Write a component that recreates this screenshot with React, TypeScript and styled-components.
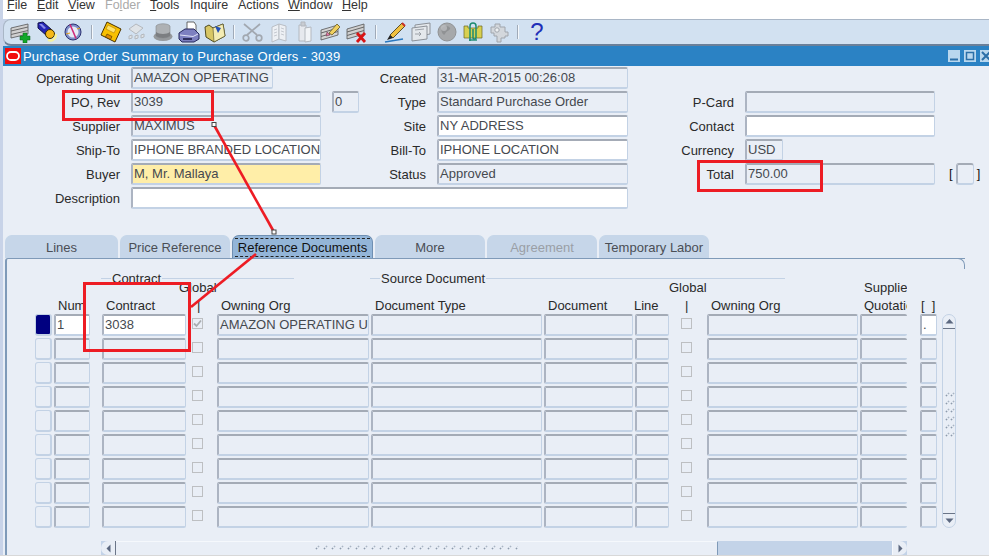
import React from 'react';
import styled, { createGlobalStyle } from 'styled-components';

const GlobalStyle = createGlobalStyle`
  html, body {
    margin: 0;
    padding: 0;
    background: #ffffff;
  }
  body {
    font-family: "Liberation Sans", Arial, sans-serif;
    font-size: 13px;
  }
`;

const Page = styled.div`
  position: relative;
  width: 989px;
  height: 558px;
  overflow: hidden;
  background: #ffffff;
`;

const Shell = styled.div`
  height: 555px;
  padding-left: 3px;
  box-sizing: border-box;
  background: #c8d3e8;
  display: flex;
  flex-direction: column;
`;

const BottomEdge = styled.div`
  height: 1px;
  background: #d8d8d8;
`;

const MenuBar = styled.div`
  height: 19px;
  flex: none;
  background: #ffffff;
  display: flex;
  padding-left: 4px;
  line-height: 10px;
  color: #333;
  font-size: 12.5px;
`;

const MenuItem = styled.span<{ $w: number; $off?: boolean }>`
  width: ${p => p.$w}px;
  color: ${p => (p.$off ? '#aaaaaa' : '#333333')};
  u { text-underline-offset: 1px; }
`;

const ToolBar = styled.div`
  height: 27px;
  flex: none;
  box-sizing: border-box;
  background: #d2e1f1;
  border-top: 1px solid #a9b6c6;
  border-left: 1px solid #a9b6c6;
  border-bottom: 2px solid #6b8099;
  border-top-left-radius: 8px;
  border-bottom-left-radius: 8px;
  display: flex;
  align-items: center;
  padding-left: 4px;
`;

const ToolSlot = styled.div`
  width: 26px;
  height: 22px;
  display: flex;
  align-items: center;
  justify-content: center;
`;

const ToolSep = styled.div`
  width: 12px;
  display: flex;
  justify-content: center;
  &::before {
    content: '';
    width: 1px;
    height: 14px;
    background: #a0aab8;
    border-right: 1px solid #f4f8fc;
  }
`;

const TitleBar = styled.div`
  height: 20px;
  flex: none;
  background: #2b82c4;
  color: #ffffff;
  display: flex;
  align-items: center;
  padding-left: 2px;
  gap: 2px;
  font-size: 13px;
  letter-spacing: 0.2px;
`;

const TitleText = styled.span`
  flex: 1;
`;

const WinButtons = styled.div`
  display: flex;
  gap: 4px;
  margin-right: -3px;
`;

const WinButton = styled.div`
  width: 12px;
  height: 12px;
  background: #b9d7ee;
  display: flex;
`;

const Body = styled.div`
  flex: 1;
  background: #e9eef6;
  display: flex;
  flex-direction: column;
  min-height: 0;
`;

const Form = styled.div`
  margin-top: 1px;
  display: grid;
  grid-template-columns: 128px 190px 38px 78px 191px 117px 190px 1fr;
  grid-auto-rows: 22px;
  row-gap: 2px;
`;

const Label = styled.div<{ $col: number; $row: number }>`
  grid-column: ${p => p.$col};
  grid-row: ${p => p.$row};
  text-align: right;
  padding-right: 11px;
  line-height: 24px;
  color: #2a2a2a;
  white-space: nowrap;
`;

const fieldColors = { ro: '#e9eef6', edit: '#ffffff', req: '#ffeea8' };

const Field = styled.div<{ $tone?: keyof typeof fieldColors; $open?: boolean }>`
  box-sizing: border-box;
  height: 22px;
  background: ${p => fieldColors[p.$tone || 'ro']};
  border-style: solid;
  border-width: 2px ${p => (p.$open ? 0 : 1)}px 2px 2px;
  border-color: #a4abb6 #c3d2e5 #c3d2e5 #acb4c2;
  border-radius: 2px;
  color: #45494f;
  line-height: 18px;
  padding-left: 1px;
  white-space: nowrap;
  overflow: hidden;
`;

const FormField = styled(Field)<{ $col: number; $row: number; $span?: number; $w?: number; $ml?: number }>`
  grid-column: ${p => p.$col} / span ${p => p.$span || 1};
  grid-row: ${p => p.$row};
  ${p => (p.$w ? `width: ${p.$w}px;` : '')}
  ${p => (p.$ml ? `margin-left: ${p.$ml}px;` : '')}
`;

const Extra = styled.div`
  grid-column: 8;
  grid-row: 5;
  display: flex;
  align-items: center;
  gap: 3px;
  margin-left: 14px;
  color: #111;
  line-height: 22px;
`;

const ExtraBox = styled(Field)`
  width: 18px;
  border-radius: 3px;
`;

const Tabs = styled.div`
  display: flex;
  gap: 2px;
  height: 23px;
  margin: 26px 0 0 2px;
  flex: none;
`;

const Tab = styled.div<{ $w: number; $active?: boolean; $off?: boolean }>`
  position: relative;
  width: ${p => p.$w}px;
  box-sizing: border-box;
  background: ${p => (p.$active ? '#93b5d8' : '#c6d6e9')};
  border: 1px solid ${p => (p.$active ? '#6f8fb2' : '#c6d6e9')};
  border-bottom: 0;
  border-radius: 7px 7px 0 0;
  text-align: center;
  line-height: 24px;
  color: ${p => (p.$off ? '#9a9fa6' : p.$active ? '#111111' : '#4a4e55')};
`;

const FocusRing = styled.span`
  position: absolute;
  inset: 2px 2px 1px 2px;
  border: 1px dashed #222;
  border-width: 1px 0;
`;

const Panel = styled.div`
  position: relative;
  flex: 1;
  width: 960px;
  box-sizing: border-box;
  margin-left: 2px;
  border-top: 1px solid #7f9ab8;
  border-left: 2px solid #7f9ab8;
  border-top-left-radius: 3px;
  padding: 12px 0 0 28px;
  &::after {
    content: '';
    position: absolute;
    top: -1px;
    right: 0;
    width: 8px;
    height: 10px;
    border-top: 1px solid #7f9ab8;
    border-right: 1px solid #7f9ab8;
    border-top-right-radius: 7px;
  }
`;

const GroupRow = styled.div`
  display: flex;
  height: 12px;
  padding-left: 66px;
`;

const Group = styled.div<{ $w: number; $ml?: number; $lead: number }>`
  width: ${p => p.$w}px;
  height: 12px;
  padding-top: 2px;
  box-sizing: content-box;
  margin-left: ${p => p.$ml || 0}px;
  display: flex;
  align-items: center;
  gap: 1px;
  color: #2a2a2a;
  line-height: 12px;
  white-space: nowrap;
  &::before, &::after {
    content: '';
    height: 1px;
    margin-top: -2px;
    background: #c3d2e5;
  }
  &::before { width: ${p => p.$lead}px; flex: none; }
  &::after { flex: 1; }
`;

const HeadRow = styled.div<{ $h: number; $lh: number }>`
  display: flex;
  height: ${p => p.$h}px;
  line-height: ${p => p.$lh}px;
  color: #2a2a2a;
`;

const HeadCell = styled.div<{ $w: number; $ml?: number; $pad?: number; $clip?: boolean }>`
  flex: none;
  box-sizing: border-box;
  width: ${p => p.$w}px;
  margin-left: ${p => p.$ml || 0}px;
  padding-left: ${p => p.$pad || 0}px;
  white-space: nowrap;
  overflow: ${p => (p.$clip ? 'hidden' : 'visible')};
`;

const TableArea = styled.div`
  display: flex;
`;

const Rows = styled.div`
  display: flex;
  flex-direction: column;
  gap: 2px;
`;

const Row = styled.div`
  display: flex;
  height: 22px;
`;

const Sized = styled(Field)<{ $w: number; $ml?: number }>`
  flex: none;
  width: ${p => p.$w}px;
  margin-left: ${p => p.$ml || 0}px;
`;

const Selector = styled.div<{ $current?: boolean }>`
  flex: none;
  box-sizing: border-box;
  width: 17px;
  height: 22px;
  border: 1px solid #c3d2e5;
  border-right-width: 2px;
  border-bottom-width: 2px;
  border-radius: 3px;
  background: ${p => (p.$current ? '#000080' : '#e9eef6')};
`;

const CheckCell = styled.div<{ $w: number; $pad: number }>`
  flex: none;
  box-sizing: border-box;
  width: ${p => p.$w}px;
  padding-left: ${p => p.$pad}px;
  padding-bottom: 3px;
  display: flex;
  align-items: center;
`;

const CheckBox = styled.div`
  box-sizing: border-box;
  width: 11px;
  height: 11px;
  border: 1px solid #bdbfc2;
  display: flex;
`;

const gripDots = `
  radial-gradient(circle at 1.5px 3.5px, #8d9aac 0.8px, transparent 1.1px),
  radial-gradient(circle at 3.5px 1.5px, #aab5c4 0.8px, transparent 1.1px)
`;

const VScroll = styled.div`
  position: relative;
  box-sizing: border-box;
  width: 14px;
  height: 214px;
  margin: 0 0 0 5px;
  border: 1px solid #c3d2e5;
  border-radius: 7px;
  display: flex;
  flex-direction: column;
  &::before {
    content: '';
    position: absolute;
    left: 2px;
    top: 77px;
    width: 10px;
    height: 48px;
    background-image: ${gripDots};
    background-size: 5px 8px;
  }
`;

const VButton = styled.div<{ $down?: boolean }>`
  height: 13px;
  flex: none;
  display: flex;
  align-items: center;
  justify-content: center;
  ${p => (p.$down ? 'border-top: 1px solid #6a7588; margin-top: auto;' : 'border-bottom: 1px solid #6a7588;')}
`;

const HScroll = styled.div`
  display: flex;
  width: 806px;
  height: 14px;
  margin: 13px 0 0 66px;
  background: #c3d3e8;
`;

const HEnd = styled.div<{ $right?: boolean }>`
  flex: none;
  box-sizing: border-box;
  width: 15px;
  background: #e9eef6;
  border-radius: ${p => (p.$right ? '0 7px 7px 0' : '7px 0 0 7px')};
  ${p => (p.$right ? 'border-left: 1px solid #f5f8fc;' : 'border-right: 1px solid #6a7588;')}
  display: flex;
  align-items: center;
  justify-content: center;
`;

const HThumb = styled.div`
  width: 602px;
  flex: none;
  box-sizing: border-box;
  border-top: 1px solid #f5f8fc;
  border-right: 1px solid #7f9ab8;
  background: #e9eef6;
  display: flex;
  align-items: center;
  justify-content: center;
`;

const HGrip = styled.div`
  width: 203px;
  height: 8px;
  background-image: ${gripDots};
  background-size: 8px 8px;
`;

const HTrack = styled.div`
  flex: 1;
`;

const RedBox = styled.div<{ $x: number; $y: number; $w: number; $h: number }>`
  position: absolute;
  left: ${p => p.$x}px;
  top: ${p => p.$y}px;
  width: ${p => p.$w}px;
  height: ${p => p.$h}px;
  box-sizing: border-box;
  border: 3px solid #ed1c24;
  pointer-events: none;
`;

const Overlay = styled.svg`
  position: absolute;
  left: 0;
  top: 0;
  pointer-events: none;
`;

const Icons: React.ReactNode[] = [
  // new record
  <g key="new">
    <path d="M1 7l17-4v10L1 17z" fill="#d0d0d0" stroke="#555" strokeWidth=".8" />
    <path d="M1 10l17-4M1 13.500l17-4" stroke="#6a6a6a" />
    <path d="M13 12h4v3h3v4h-3v3h-4v-3h-3v-4h3z" fill="#12a82a" stroke="#0c5c18" strokeWidth=".5" />
  </g>,
  // find
  <g key="find">
    <path d="M2 2l5-1 9 8-5 6-9-8z" fill="#2424b4" stroke="#10104a" />
    <path d="M3 3l3 0 4 4-2 1z" fill="#8a8ae8" />
    <circle cx="14" cy="13" r="4.5" fill="#f5b818" stroke="#3a2e00" />
    <path d="M12 19c4 2 8-1 8-6" stroke="#f7f29a" strokeWidth="2.2" fill="none" />
  </g>,
  // navigator
  <g key="nav">
    <circle cx="11" cy="11" r="8" fill="#7f8fc8" stroke="#2a3070" />
    <circle cx="11" cy="11" r="5.500" fill="#e6e9f6" />
    <path d="M8 3.500l3.500 8 2.500 6" stroke="#d02a7a" strokeWidth="1.6" fill="none" />
    <path d="M4 13l4-1M15 8l3-1" stroke="#e0a020" strokeWidth="1.2" />
  </g>,
  // save
  <g key="save">
    <path d="M7 1l14 7-6 13-14-7z" fill="#f8c000" stroke="#4a3200" />
    <path d="M8 4l8 4-2 4-8-4z" fill="#ffe36a" stroke="#b07c00" strokeWidth=".6" />
    <path d="M7 13l5 2.500-1.500 3-5-2.500z" fill="#e08a00" stroke="#4a3200" strokeWidth=".6" />
  </g>,
  // next step, disabled
  <g key="next" stroke="#b4b8bd" fill="#dfe3e7">
    <path d="M3 8l7-5 7 4-7 6z" />
    <path d="M3 15l3-1v3l-3 1zM9 15l3-1v3l-3 1zM15 14l3-1v3l-3 1z" />
  </g>,
  // hat, disabled
  <g key="hat">
    <ellipse cx="11" cy="15.500" rx="9.500" ry="4.500" fill="#96999c" />
    <path d="M4 5c2-3 12-3 14 0v10c-3 2.500-11 2.500-14 0z" fill="#aeb1b4" stroke="#85888b" strokeWidth=".6" />
    <path d="M4 11c3 2.500 11 2.500 14 0v4c-3 2.500-11 2.500-14 0z" fill="#7c7e81" />
  </g>,
  // print
  <g key="print">
    <path d="M9 1h7l2 3v7H9z" fill="#fff" stroke="#444" strokeWidth=".8" />
    <path d="M1 12l6-4h9l5 5v5l-5 3H4l-3-3z" fill="#7d80c0" stroke="#26285c" />
    <path d="M2 14l13 1.500 5-2.500" stroke="#dfe2f6" fill="none" />
    <path d="M5 18h9" stroke="#1c1c44" strokeWidth="1.6" />
  </g>,
  // close form
  <g key="folder">
    <path d="M1 6l4-2 4 3 10-4 2 12-11 6-8-5z" fill="#d8c664" stroke="#4e4a20" />
    <path d="M9 7l10-4 2 12-11 6z" fill="#f4ecb4" stroke="#4e4a20" strokeWidth=".6" />
    <path d="M11 5l6 2-3 5z" fill="#2450b8" />
  </g>,
  // cut
  <g key="cut" fill="none" stroke="#a2a8b0" strokeWidth="1.700">
    <path d="M2 3l13 11M18 3L5 14" />
    <circle cx="4" cy="17" r="2.800" />
    <circle cx="17" cy="17" r="2.800" />
  </g>,
  // copy, disabled
  <g key="copy" fill="#edf0f4" stroke="#b9bec5">
    <path d="M4 6l7-3v15l-7 3z" />
    <path d="M11 3l7 2v15l-7-2z" />
    <path d="M6 9l3-1M6 12l3-1M6 15l3-1M13 7l3 1M13 10l3 1M13 13l3 1" strokeWidth=".8" />
  </g>,
  // paste, disabled
  <g key="paste" fill="#e6e9ee" stroke="#b3b8bf">
    <path d="M5 4h7v16H5z" />
    <path d="M11 7l6-1v14l-6 1z" fill="#f1f4f7" />
    <path d="M7 1l4 0v4H7z" fill="#c8ccd2" />
  </g>,
  // clear record
  <g key="clear">
    <path d="M1 9l17-5v10L1 19z" fill="#d4d4d4" stroke="#555" strokeWidth=".8" />
    <path d="M1 12l17-5M1 15.500l17-5" stroke="#666" />
    <path d="M9 12l8-9 3 3-8 8z" fill="#f0d060" stroke="#5a4a10" strokeWidth=".7" />
    <path d="M7 11l3 3-4 1z" fill="#e07aa0" stroke="#5a2a40" strokeWidth=".5" />
  </g>,
  // delete record
  <g key="del">
    <path d="M1 8l17-5v10L1 18z" fill="#cfcfcf" stroke="#555" strokeWidth=".8" />
    <path d="M1 11l17-5M1 14.500l17-5" stroke="#666" />
    <path d="M11 12l8 9M19 12l-8 9" stroke="#d81414" strokeWidth="2.800" />
  </g>,
  // edit field
  <g key="pen">
    <path d="M6 14L18 2l3 3L9 17z" fill="#f0c040" stroke="#3a3010" strokeWidth=".8" />
    <path d="M18 2l3 3" stroke="#c8302a" strokeWidth="2" />
    <path d="M6 14l-3 5 6-2z" fill="#222" />
    <path d="M1 21l18-3" stroke="#2a78c0" strokeWidth="1.600" />
  </g>,
  // zoom
  <g key="zoom" fill="#e4e8ec" stroke="#8c9198">
    <path d="M5 4l15-2v11L5 16z" />
    <path d="M2 7l15-2v13L2 20z" />
    <path d="M5 13h6M9 11l2 2-2 2M5 9l9-1" fill="none" strokeWidth=".8" />
  </g>,
  // translations, disabled
  <g key="globe">
    <circle cx="11" cy="11" r="9" fill="#a6a8aa" stroke="#909294" />
    <path d="M6 7c3-3 7-2 8 0s-4 3-5 6-5-3-3-6z" fill="#909294" />
    <circle cx="8" cy="7" r="3" fill="#c0c2c4" opacity=".7" />
  </g>,
  // attachments
  <g key="attach">
    <path d="M2 5h4v2h10V5h4v12H2z" fill="#d8d050" stroke="#6a6420" strokeWidth=".7" />
    <path d="M7 19h8" stroke="#1c8a70" strokeWidth="1.400" />
    <path d="M8 20V5a3 3 0 016 0v12a1.600 1.600 0 01-3 0V8" fill="none" stroke="#1c8a70" strokeWidth="1.500" />
  </g>,
  // folder tools, disabled
  <g key="puzzle" fill="#d3d7dc" stroke="#a0a5ac">
    <path d="M3 6h4V3h5v3h5v5h3v4h-3v2h-4v4H9v-6H6v-3H3z" />
    <circle cx="9" cy="9" r="2.200" fill="#edf0f2" />
  </g>
];

const HelpGlyph = styled.span`
  font-family: "Liberation Sans", Arial, sans-serif;
  font-size: 24px;
  line-height: 22px;
  color: #1f2fb8;
`;

const groups: number[][] = [[0, 1, 2], [3, 4, 5, 6, 7], [8, 9, 10, 11, 12], [13, 14, 15, 16, 17]];

const Icon = ({ i }: { i: number }) => (
  <ToolSlot>
    <svg width="22" height="22" viewBox="0 0 22 22">{Icons[i]}</svg>
  </ToolSlot>
);

const Arrow = ({ d }: { d: string }) => (
  <svg width="9" height="9" viewBox="0 0 9 9"><path d={d} fill="#5c6880" /></svg>
);

const Check = ({ on }: { on?: boolean }) => (
  <CheckBox>
    {on && (
      <svg width="9" height="9" viewBox="0 0 9 9">
        <path d="M1 4.500l2.500 2.500L8 1.500" fill="none" stroke="#a9adb2" strokeWidth="1.800" />
      </svg>
    )}
  </CheckBox>
);

const menu = [
  { w: 30, pre: '', key: 'F', post: 'ile' },
  { w: 31, pre: '', key: 'E', post: 'dit' },
  { w: 37, pre: '', key: 'V', post: 'iew' },
  { w: 45, pre: 'Fo', key: 'l', post: 'der', off: true },
  { w: 40, pre: '', key: 'T', post: 'ools' },
  { w: 48, pre: '', key: '', post: 'Inquire' },
  { w: 50, pre: '', key: '', post: 'Actions' },
  { w: 54, pre: '', key: 'W', post: 'indow' },
  { w: 40, pre: '', key: 'H', post: 'elp' }
];

const tabs = [
  { label: 'Lines', w: 113 },
  { label: 'Price Reference', w: 110 },
  { label: 'Reference Documents', w: 141, active: true },
  { label: 'More', w: 110 },
  { label: 'Agreement', w: 110, off: true },
  { label: 'Temporary Labor', w: 110 }
];

const rowIds = [0, 1, 2, 3, 4, 5, 6, 7, 8];

export default function App() {
  return (
    <Page>
      <GlobalStyle />
      <Shell>
        <MenuBar>
          {menu.map(m => (
            <MenuItem key={m.post} $w={m.w} $off={m.off}>
              {m.pre}<u>{m.key}</u>{m.post}
            </MenuItem>
          ))}
        </MenuBar>
        <ToolBar>
          {groups.map((g, n) => (
            <React.Fragment key={n}>
              {n > 0 && <ToolSep />}
              {g.map(i => <Icon key={i} i={i} />)}
            </React.Fragment>
          ))}
          <ToolSep />
          <ToolSlot><HelpGlyph>?</HelpGlyph></ToolSlot>
        </ToolBar>
        <TitleBar>
          <svg width="16" height="16" viewBox="0 0 16 16">
            <rect width="16" height="16" fill="#f20d0d" />
            <rect x="2" y="4" width="12" height="8" rx="4" fill="none" stroke="#fff" strokeWidth="1.800" />
          </svg>
          <TitleText>Purchase Order Summary to Purchase Orders - 3039</TitleText>
          <WinButtons>
            <WinButton>
              <svg width="12" height="12" viewBox="0 0 12 12"><path d="M2 9.500h8" stroke="#2b6fa8" strokeWidth="2" /></svg>
            </WinButton>
            <WinButton>
              <svg width="12" height="12" viewBox="0 0 12 12"><rect x="2.500" y="2.500" width="7" height="7" fill="none" stroke="#2b6fa8" strokeWidth="1.500" /></svg>
            </WinButton>
            <WinButton>
              <svg width="12" height="12" viewBox="0 0 12 12"><path d="M2 2l8 8M10 2l-8 8" stroke="#2b6fa8" strokeWidth="2" /></svg>
            </WinButton>
          </WinButtons>
        </TitleBar>
        <Body>
          <Form>
            <Label $col={1} $row={1}>Operating Unit</Label>
            <FormField $col={2} $row={1} $w={142}>AMAZON OPERATING</FormField>
            <Label $col={4} $row={1}>Created</Label>
            <FormField $col={5} $row={1}>31-MAR-2015 00:26:08</FormField>

            <Label $col={1} $row={2}>PO, Rev</Label>
            <FormField $col={2} $row={2}>3039</FormField>
            <FormField $col={3} $row={2} $w={27} $ml={11}>0</FormField>
            <Label $col={4} $row={2}>Type</Label>
            <FormField $col={5} $row={2}>Standard Purchase Order</FormField>
            <Label $col={6} $row={2}>P-Card</Label>
            <FormField $col={7} $row={2} />

            <Label $col={1} $row={3}>Supplier</Label>
            <FormField $col={2} $row={3}>MAXIMUS</FormField>
            <Label $col={4} $row={3}>Site</Label>
            <FormField $col={5} $row={3} $tone="edit">NY ADDRESS</FormField>
            <Label $col={6} $row={3}>Contact</Label>
            <FormField $col={7} $row={3} $tone="edit" />

            <Label $col={1} $row={4}>Ship-To</Label>
            <FormField $col={2} $row={4} $tone="edit">IPHONE BRANDED LOCATION</FormField>
            <Label $col={4} $row={4}>Bill-To</Label>
            <FormField $col={5} $row={4} $tone="edit">IPHONE LOCATION</FormField>
            <Label $col={6} $row={4}>Currency</Label>
            <FormField $col={7} $row={4} $w={38}>USD</FormField>

            <Label $col={1} $row={5}>Buyer</Label>
            <FormField $col={2} $row={5} $tone="req">M, Mr. Mallaya</FormField>
            <Label $col={4} $row={5}>Status</Label>
            <FormField $col={5} $row={5}>Approved</FormField>
            <Label $col={6} $row={5}>Total</Label>
            <FormField $col={7} $row={5}>750.00</FormField>
            <Extra>[<ExtraBox />]</Extra>

            <Label $col={1} $row={6}>Description</Label>
            <FormField $col={2} $row={6} $span={4} $tone="edit" />
          </Form>

          <Tabs>
            {tabs.map(t => (
              <Tab key={t.label} $w={t.w} $active={t.active} $off={t.off}>
                {t.label}
                {t.active && <FocusRing />}
              </Tab>
            ))}
          </Tabs>

          <Panel>
            <GroupRow>
              <Group $w={193} $lead={10}>Contract</Group>
              <Group $w={415} $ml={76} $lead={10}>Source Document</Group>
            </GroupRow>
            <HeadRow $h={15} $lh={10}>
              <HeadCell $w={37} $ml={144}>Global</HeadCell>
              <HeadCell $w={37} $ml={453}>Global</HeadCell>
              <HeadCell $w={43} $ml={158} $clip>Supplier</HeadCell>
            </HeadRow>
            <HeadRow $h={16} $lh={16}>
              <HeadCell $w={17} />
              <HeadCell $w={36} $ml={2} $pad={4}>Num</HeadCell>
              <HeadCell $w={84} $ml={12} $pad={4}>Contract</HeadCell>
              <HeadCell $w={31} $pad={11}>|</HeadCell>
              <HeadCell $w={152} $pad={4}>Owning Org</HeadCell>
              <HeadCell $w={171} $ml={2} $pad={4}>Document Type</HeadCell>
              <HeadCell $w={89} $ml={2} $pad={4}>Document</HeadCell>
              <HeadCell $w={35} $ml={1}>Line</HeadCell>
              <HeadCell $w={38} $pad={16}>|</HeadCell>
              <HeadCell $w={151} $pad={4}>Owning Org</HeadCell>
              <HeadCell $w={47} $ml={2} $pad={4} $clip>Quotation</HeadCell>
              <HeadCell $w={17} $ml={14}>[ &nbsp;]</HeadCell>
            </HeadRow>
            <TableArea>
              <Rows>
                {rowIds.map(r => (
                  <Row key={r}>
                    <Selector $current={r === 0} />
                    <Sized $w={36} $ml={2} $tone={r === 0 ? 'edit' : 'ro'}>{r === 0 && '1'}</Sized>
                    <Sized $w={84} $ml={12} $tone={r === 0 ? 'edit' : 'ro'}>{r === 0 && '3038'}</Sized>
                    <CheckCell $w={31} $pad={6}><Check on={r === 0} /></CheckCell>
                    <Sized $w={152}>{r === 0 && 'AMAZON OPERATING UNIT'}</Sized>
                    <Sized $w={171} $ml={2} />
                    <Sized $w={89} $ml={2} />
                    <Sized $w={34} $ml={2} />
                    <CheckCell $w={38} $pad={12}><Check /></CheckCell>
                    <Sized $w={151} />
                    <Sized $w={47} $ml={2} $open />
                    <Sized $w={17} $ml={13} $tone={r === 0 ? 'edit' : 'ro'}>{r === 0 && '.'}</Sized>
                  </Row>
                ))}
              </Rows>
              <VScroll>
                <VButton><Arrow d="M4.500 2l4 4.500h-8z" /></VButton>
                <VButton $down><Arrow d="M.5 2.500h8l-4 4.500z" /></VButton>
              </VScroll>
            </TableArea>
            <HScroll>
              <HEnd><Arrow d="M2.500 4.500l4-4v8z" /></HEnd>
              <HThumb><HGrip /></HThumb>
              <HTrack />
              <HEnd $right><Arrow d="M2.500.5l4 4-4 4z" /></HEnd>
            </HScroll>
          </Panel>
        </Body>
      </Shell>
      <BottomEdge />

      <Overlay width="989" height="558" viewBox="0 0 989 558">
        <path d="M214 125L274 232" stroke="#ed1c24" strokeWidth="2.600" />
        <path d="M256 254L191 307" stroke="#ed1c24" strokeWidth="2.600" />
        <rect x="212" y="122.500" width="4" height="4" fill="#fff" stroke="#444" />
        <rect x="272" y="230" width="4" height="4" fill="#fff" stroke="#444" />
      </Overlay>
      <RedBox $x={62} $y={90} $w={152} $h={31} />
      <RedBox $x={697} $y={160} $w={126} $h={32} />
      <RedBox $x={83} $y={282} $w={108} $h={70} />
    </Page>
  );
}
